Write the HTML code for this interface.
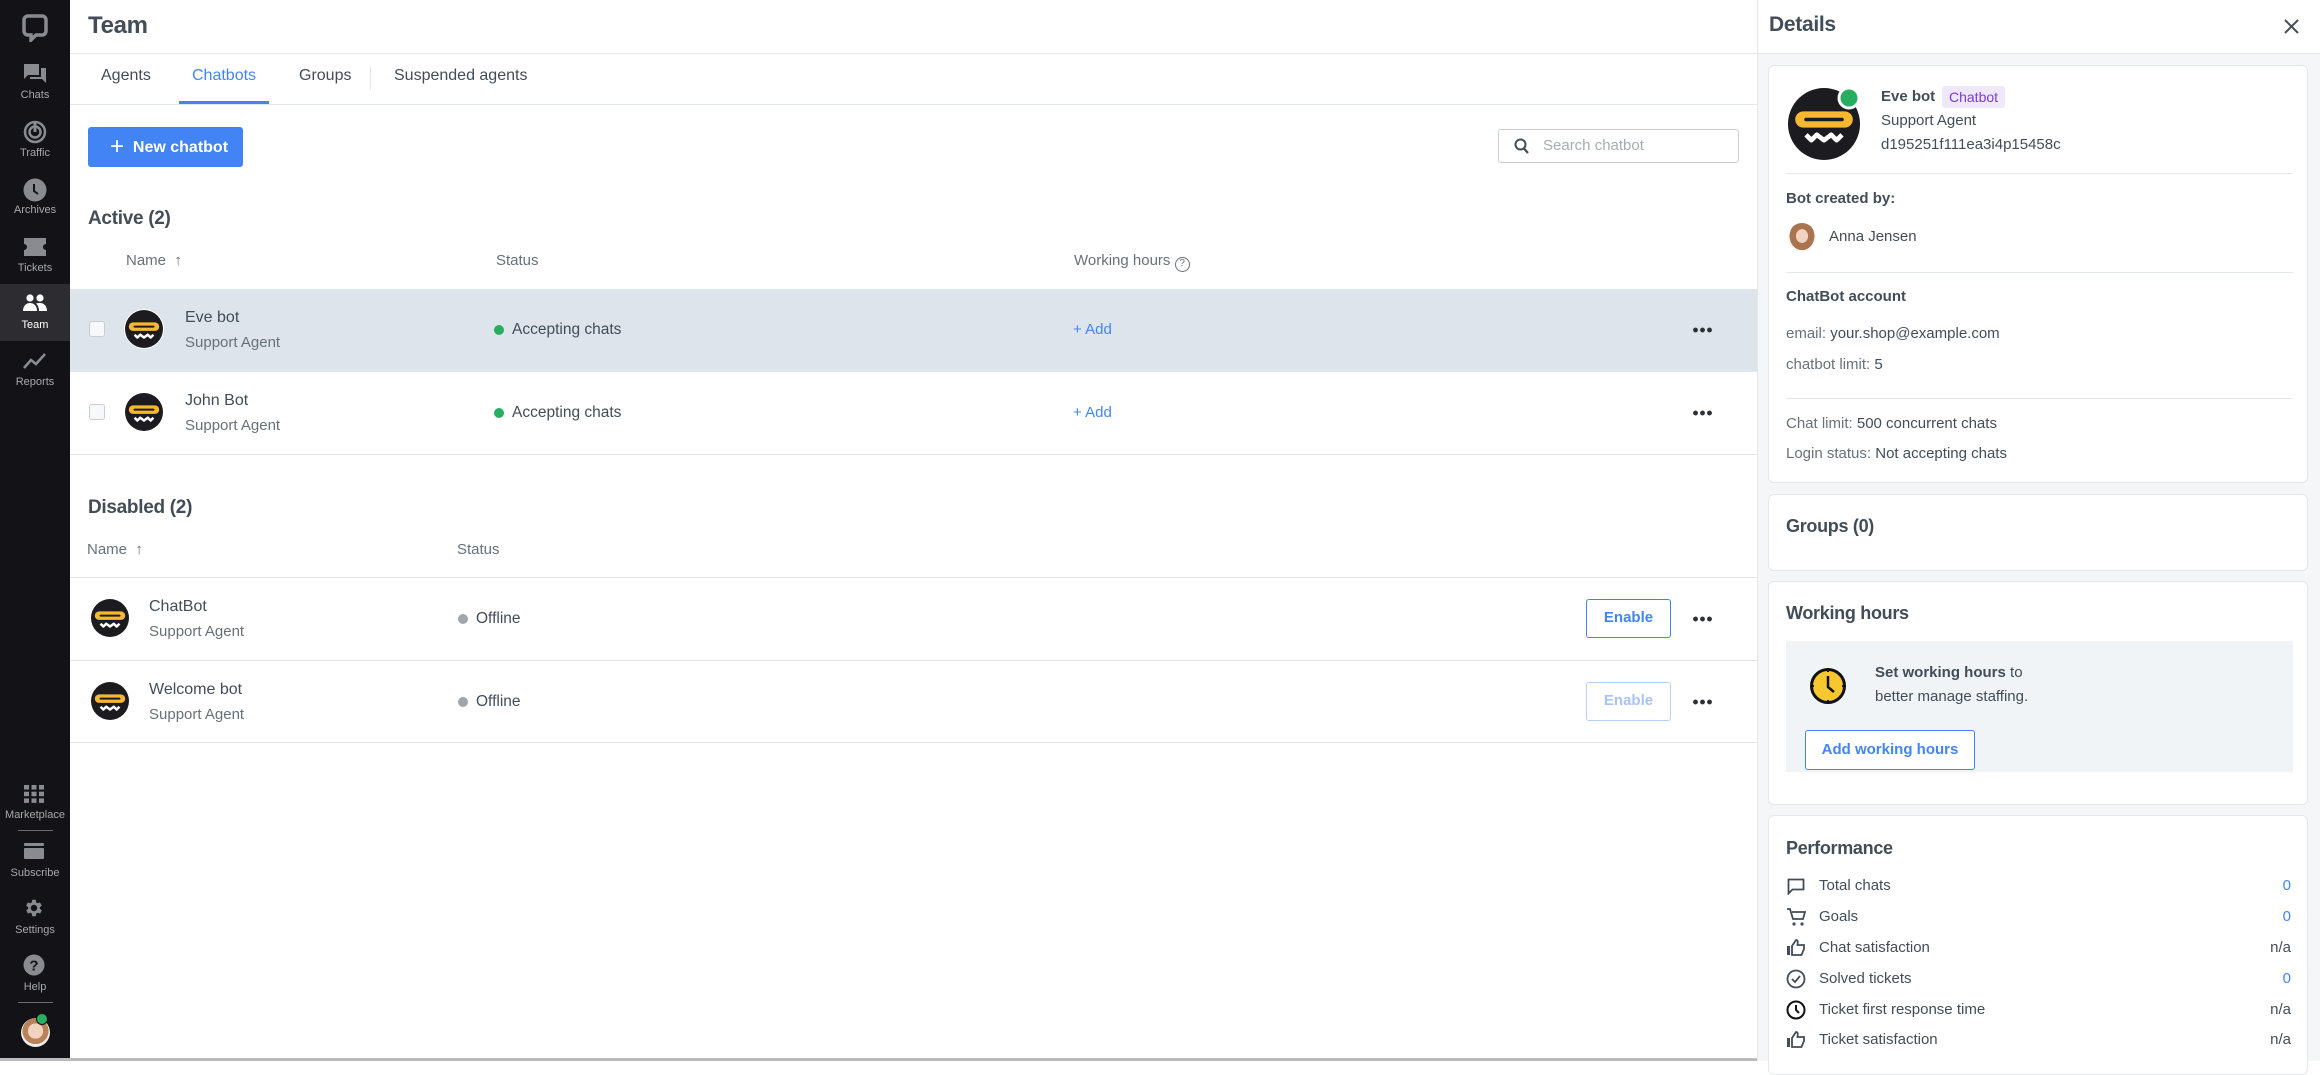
<!DOCTYPE html>
<html><head><meta charset="utf-8"><style>
*{box-sizing:border-box;margin:0;padding:0}
body{width:2320px;height:1061px;overflow:hidden;background:#fff;font-family:"Liberation Sans",sans-serif;color:#424d57;position:relative}
.a{position:absolute;white-space:nowrap}
.sb{position:absolute;left:0;top:0;width:70px;height:1061px;background:#131317}
.sl{position:absolute;left:0;width:70px;text-align:center;font-size:11px;color:#a7a8ad}
.ic{position:absolute;left:23px}
.t{font-size:16px;color:#424d57}
.s{font-size:15px;color:#677179}
.h{font-size:15px;color:#677179}
.line{position:absolute;height:1px;background:#e4e8ec}
.dot{position:absolute;width:10px;height:10px;border-radius:50%}
.card{position:absolute;left:1768px;width:540px;border:1px solid #e4e8ec;border-radius:6px;background:#fff}
.dots{position:absolute;width:20px;height:6px;background:radial-gradient(circle,#2d3238 2.2px,transparent 2.6px) 0 0/7px 6px repeat-x}
.hd{font-weight:bold;letter-spacing:-0.3px}
</style></head><body>
<svg width="0" height="0" style="position:absolute"><defs>
<symbol id="bot" viewBox="0 0 40 40"><circle cx="20" cy="20" r="20" fill="#1b1b20"/><rect x="4" y="13" width="32" height="9" rx="4.5" fill="#f5b830"/><rect x="9" y="16.5" width="22" height="2" rx="1" fill="#1b1b20"/><path d="M10 26 l3 3 l3-3 l4 3 l4-3 l3 3 l3-3" stroke="#fff" stroke-width="2.6" fill="none" stroke-linejoin="round"/></symbol>
</defs></svg>

<div class="sb">
<svg class="ic" style="top:14px;left:22px" width="26" height="28" viewBox="0 0 26 28"><path d="M6 2h14a4 4 0 0 1 4 4v11a4 4 0 0 1-4 4h-6l-5 5v-5H6a4 4 0 0 1-4-4V6a4 4 0 0 1 4-4z" fill="none" stroke="#8a8b90" stroke-width="3.5"/></svg>
<svg class="ic" style="top:63px" width="24" height="22" viewBox="0 0 24 22"><path d="M1 1h15v11H5l-4 4z" fill="#8a8b90"/><path d="M18 5h5v15l-4-4H7v-2h11z" fill="#8a8b90"/></svg>
<div class="sl" style="top:89px">Chats</div>
<svg class="ic" style="top:120px" width="24" height="24" viewBox="0 0 24 24"><circle cx="12" cy="12" r="10" fill="none" stroke="#8a8b90" stroke-width="2.5"/><circle cx="12" cy="12" r="5.5" fill="none" stroke="#8a8b90" stroke-width="2.5"/><path d="M12 2v10" stroke="#8a8b90" stroke-width="3"/></svg>
<div class="sl" style="top:147px">Traffic</div>
<svg class="ic" style="top:178px" width="24" height="24" viewBox="0 0 24 24"><circle cx="12" cy="12" r="11.5" fill="#8a8b90"/><path d="M11 6v7l4 3" stroke="#131317" stroke-width="2" fill="none"/></svg>
<div class="sl" style="top:204px">Archives</div>
<svg class="ic" style="top:237px" width="24" height="20" viewBox="0 0 24 20"><path d="M1 1h22v6a3 3 0 0 0 0 6v6H1v-6a3 3 0 0 0 0-6z" fill="#8a8b90"/></svg>
<div class="sl" style="top:262px">Tickets</div>
<div style="position:absolute;top:284px;left:0;width:70px;height:57px;background:#2c2c31"></div>
<svg class="ic" style="top:294px" width="24" height="18" viewBox="0 0 24 18"><circle cx="7" cy="4" r="3.6" fill="#fff"/><circle cx="17" cy="4" r="3.6" fill="#fff"/><path d="M0 17c0-5 3-8 7-8s7 3 7 8z" fill="#fff"/><path d="M13 9.5c1-.4 2.5-.5 4-.5 4 0 7 3 7 8h-8c0-3-1-6-3-7.5z" fill="#fff"/></svg>
<div class="sl" style="top:319px;color:#fff">Team</div>
<svg class="ic" style="top:352px" width="24" height="18" viewBox="0 0 24 18"><path d="M1 16l7-8 5 4 9-10" stroke="#8a8b90" stroke-width="2.5" fill="none"/></svg>
<div class="sl" style="top:376px">Reports</div>
<svg class="ic" style="top:784px" width="22" height="20" viewBox="0 0 22 20"><g fill="#8a8b90"><rect x="1" y="1" width="5" height="4.5"/><rect x="8.5" y="1" width="5" height="4.5"/><rect x="16" y="1" width="5" height="4.5"/><rect x="1" y="7.7" width="5" height="4.5"/><rect x="8.5" y="7.7" width="5" height="4.5"/><rect x="16" y="7.7" width="5" height="4.5"/><rect x="1" y="14.4" width="5" height="4.5"/><rect x="8.5" y="14.4" width="5" height="4.5"/><rect x="16" y="14.4" width="5" height="4.5"/></g></svg>
<div class="sl" style="top:809px">Marketplace</div>
<div style="position:absolute;left:18px;top:830px;width:35px;height:1px;background:#6a6b70"></div>
<svg class="ic" style="top:843px" width="22" height="17" viewBox="0 0 22 17"><rect x="1" y="0" width="20" height="3" rx="1" fill="#8a8b90"/><rect x="1" y="5" width="20" height="11" rx="1" fill="#8a8b90"/></svg>
<div class="sl" style="top:867px">Subscribe</div>
<svg class="ic" style="top:897px" width="22" height="22" viewBox="0 0 24 24"><path fill="#8a8b90" d="M19.4 13a7.7 7.7 0 0 0 0-2l2.1-1.6-2-3.5-2.5 1a7.5 7.5 0 0 0-1.7-1L15 3h-4l-.4 2.9a7.5 7.5 0 0 0-1.7 1l-2.5-1-2 3.5L6.6 11a7.7 7.7 0 0 0 0 2l-2.1 1.6 2 3.5 2.5-1a7.5 7.5 0 0 0 1.7 1L11 21h4l.4-2.9a7.5 7.5 0 0 0 1.7-1l2.5 1 2-3.5zM13 15.5a3.5 3.5 0 1 1 0-7 3.5 3.5 0 0 1 0 7z" transform="translate(-1 0)"/></svg>
<div class="sl" style="top:924px">Settings</div>
<svg class="ic" style="top:954px" width="22" height="22" viewBox="0 0 22 22"><circle cx="11" cy="11" r="10.5" fill="#8a8b90"/><text x="11" y="16.5" text-anchor="middle" font-size="15" font-weight="bold" fill="#131317" font-family="Liberation Sans">?</text></svg>
<div class="sl" style="top:981px">Help</div>
<div style="position:absolute;left:18px;top:1002px;width:35px;height:1px;background:#6a6b70"></div>
<div style="position:absolute;left:21px;top:1018px;width:29px;height:29px;border-radius:50%;background:radial-gradient(circle at 50% 45%,#f1d3bf 0 35%,#b9835a 36% 60%,#eee 61%)"></div>
<div style="position:absolute;left:36px;top:1013px;width:12px;height:12px;border-radius:50%;background:#27ae60;border:1px solid #131317"></div>
</div>

<!-- main -->
<div class="a hd" style="left:88px;top:12px;font-size:24px;color:#424d57">Team</div>
<div class="line" style="left:70px;top:53px;width:1687px"></div>
<div class="a" style="left:101px;top:67px;font-size:16px;color:#424d57">Agents</div>
<div class="a" style="left:192px;top:67px;font-size:16px;color:#4384f5">Chatbots</div>
<div style="position:absolute;left:179px;top:101px;width:90px;height:4px;background:#4384f5"></div>
<div class="a" style="left:299px;top:67px;font-size:16px;color:#424d57">Groups</div>
<div style="position:absolute;left:370px;top:66px;width:1px;height:24px;background:#e4e8ec"></div>
<div class="a" style="left:394px;top:67px;font-size:16px;color:#424d57">Suspended agents</div>
<div class="line" style="left:70px;top:104px;width:1687px"></div>

<div style="position:absolute;left:88px;top:127px;width:155px;height:40px;background:#4384f5;border-radius:3px;color:#fff;font-size:16px;font-weight:bold;line-height:40px;padding-left:22px"><span style="font-size:24px;font-weight:normal;vertical-align:-2px">+</span>&nbsp; New chatbot</div>

<div style="position:absolute;left:1498px;top:129px;width:241px;height:34px;border:1px solid #c9cdd2;border-radius:3px"></div>
<svg class="a" style="left:1514px;top:138px" width="16" height="17" viewBox="0 0 16 17"><circle cx="6.5" cy="6.5" r="5" stroke="#424d57" stroke-width="2" fill="none"/><path d="M10 10.5l4 4.5" stroke="#424d57" stroke-width="2.2"/></svg>
<div class="a" style="left:1543px;top:137px;font-size:15px;color:#a7adb3">Search chatbot</div>

<div class="a hd" style="left:88px;top:208px;font-size:19px;color:#424d57">Active (2)</div>
<div class="a h" style="left:126px;top:252px">Name &nbsp;<span style="font-size:15px">↑</span></div>
<div class="a h" style="left:496px;top:252px">Status</div>
<div class="a h" style="left:1074px;top:252px">Working hours <span style="display:inline-block;width:15px;height:15px;border:1.5px solid #677179;border-radius:50%;font-size:10px;text-align:center;line-height:12px;vertical-align:-1px">?</span></div>

<div style="position:absolute;left:70px;top:289px;width:1687px;height:82px;background:#dde4eb"></div>
<div class="line" style="left:70px;top:371px;width:1687px"></div>
<div class="line" style="left:70px;top:454px;width:1687px"></div>

<!-- row1 -->
<div style="position:absolute;left:89px;top:321px;width:16px;height:16px;border:1px solid #c9cdd2;border-radius:3px;background:#f6f8fa"></div>
<svg class="a" style="left:124px;top:309px" width="40" height="40"><circle cx="20" cy="20" r="20" fill="#fff"/><use href="#bot" x="1" y="1" width="38" height="38"/></svg>
<div class="a t" style="left:185px;top:309px">Eve bot</div>
<div class="a s" style="left:185px;top:334px">Support Agent</div>
<div class="dot" style="left:494px;top:325px;background:#27ae60"></div>
<div class="a" style="left:512px;top:321px;font-size:15.5px">Accepting chats</div>
<div class="a" style="left:1073px;top:321px;font-size:15px;color:#4384f5">+ Add</div>
<div class="dots" style="left:1692px;top:327px"></div>
<!-- row2 -->
<div style="position:absolute;left:89px;top:404px;width:16px;height:16px;border:1px solid #c9cdd2;border-radius:3px;background:#f6f8fa"></div>
<svg class="a" style="left:124px;top:392px" width="40" height="40"><use href="#bot" x="1" y="1" width="38" height="38"/></svg>
<div class="a t" style="left:185px;top:392px">John Bot</div>
<div class="a s" style="left:185px;top:417px">Support Agent</div>
<div class="dot" style="left:494px;top:408px;background:#27ae60"></div>
<div class="a" style="left:512px;top:404px;font-size:15.5px">Accepting chats</div>
<div class="a" style="left:1073px;top:404px;font-size:15px;color:#4384f5">+ Add</div>
<div class="dots" style="left:1692px;top:410px"></div>

<div class="a hd" style="left:88px;top:497px;font-size:19px;color:#424d57">Disabled (2)</div>
<div class="a h" style="left:87px;top:541px">Name &nbsp;↑</div>
<div class="a h" style="left:457px;top:541px">Status</div>
<div class="line" style="left:70px;top:577px;width:1687px"></div>
<div class="line" style="left:70px;top:660px;width:1687px"></div>
<div class="line" style="left:70px;top:742px;width:1687px"></div>
<!-- row3 -->
<svg class="a" style="left:90px;top:598px" width="40" height="40"><use href="#bot" x="1" y="1" width="38" height="38"/></svg>
<div class="a t" style="left:149px;top:598px">ChatBot</div>
<div class="a s" style="left:149px;top:623px">Support Agent</div>
<div class="dot" style="left:458px;top:614px;background:#a2a6ab"></div>
<div class="a" style="left:476px;top:610px;font-size:15.5px">Offline</div>
<div style="position:absolute;left:1586px;top:599px;width:85px;height:39px;border:1.5px solid #4384f5;border-radius:3px;color:#4384f5;font-size:15px;font-weight:bold;text-align:center;line-height:36px">Enable</div>
<div class="dots" style="left:1692px;top:616px"></div>
<!-- row4 -->
<svg class="a" style="left:90px;top:681px" width="40" height="40"><use href="#bot" x="1" y="1" width="38" height="38"/></svg>
<div class="a t" style="left:149px;top:681px">Welcome bot</div>
<div class="a s" style="left:149px;top:706px">Support Agent</div>
<div class="dot" style="left:458px;top:697px;background:#a2a6ab"></div>
<div class="a" style="left:476px;top:693px;font-size:15.5px">Offline</div>
<div style="position:absolute;left:1586px;top:682px;width:85px;height:39px;border:1.5px solid #b9cff8;border-radius:3px;color:#a9c3f5;font-size:15px;font-weight:bold;text-align:center;line-height:36px">Enable</div>
<div class="dots" style="left:1692px;top:699px"></div>

<div style="position:absolute;left:0;top:1058px;width:2320px;height:3px;background:#bbb"></div>

<!-- right panel -->
<div style="position:absolute;left:1757px;top:0;width:563px;height:1061px;background:#f5f6f8;border-left:1px solid #e4e8ec"></div>
<div style="position:absolute;left:1758px;top:0;width:562px;height:54px;background:#fff;border-bottom:1px solid #e4e8ec"></div>
<div class="a hd" style="left:1769px;top:13px;font-size:21px;color:#424d57">Details</div>
<svg class="a" style="left:2283px;top:18px" width="17" height="17"><path d="M2 2l13 13M15 2L2 15" stroke="#424d57" stroke-width="2"/></svg>

<div class="card" style="top:65px;height:418px">
<svg class="a" style="left:18px;top:17px" width="78" height="78"><use href="#bot" width="72" height="72" x="1" y="5"/><circle cx="62" cy="15" r="10" fill="#27ae60" stroke="#fff" stroke-width="3"/></svg>
<div class="a" style="left:112px;top:22px;font-size:15px;font-weight:bold;color:#424d57">Eve bot</div>
<div class="a" style="left:173px;top:20px;height:22px;padding:0 7px;background:#efe8fb;border-radius:3px;color:#7c3ad8;font-size:14px;line-height:22px">Chatbot</div>
<div class="a" style="left:112px;top:46px;font-size:15px;color:#424d57">Support Agent</div>
<div class="a" style="left:112px;top:70px;font-size:15px;color:#424d57">d195251f111ea3i4p15458c</div>
<div class="line" style="left:17px;top:107px;width:507px"></div>
<div class="a" style="left:17px;top:124px;font-size:15px;font-weight:bold;color:#424d57">Bot created by:</div>
<div style="position:absolute;left:19px;top:157px;width:28px;height:29px;border-radius:50%;background:radial-gradient(ellipse at 50% 45%,#f1d3bf 0 30%,#a97550 31% 62%,#f4f4f4 63%)"></div>
<div class="a" style="left:60px;top:162px;font-size:15px;color:#424d57">Anna Jensen</div>
<div class="line" style="left:17px;top:206px;width:507px"></div>
<div class="a" style="left:17px;top:222px;font-size:15px;font-weight:bold;color:#424d57">ChatBot account</div>
<div class="a" style="left:17px;top:259px;font-size:15px;color:#677179">email: <span style="color:#424d57">your.shop@example.com</span></div>
<div class="a" style="left:17px;top:290px;font-size:15px;color:#677179">chatbot limit: <span style="color:#424d57">5</span></div>
<div class="line" style="left:17px;top:332px;width:507px"></div>
<div class="a" style="left:17px;top:349px;font-size:15px;color:#677179">Chat limit: <span style="color:#424d57">500 concurrent chats</span></div>
<div class="a" style="left:17px;top:379px;font-size:15px;color:#677179">Login status: <span style="color:#424d57">Not accepting chats</span></div>
</div>

<div class="card" style="top:494px;height:77px">
<div class="a hd" style="left:17px;top:21px;font-size:18px;color:#424d57">Groups (0)</div>
</div>

<div class="card" style="top:581px;height:224px">
<div class="a hd" style="left:17px;top:21px;font-size:18px;color:#424d57">Working hours</div>
<div style="position:absolute;left:17px;top:59px;width:507px;height:131px;background:#f0f4f7"></div>
<svg class="a" style="left:39px;top:84px" width="40" height="40" viewBox="0 0 40 40"><circle cx="20" cy="20" r="16.5" fill="#f7c730" stroke="#111" stroke-width="3"/><path d="M20 10v11l6 5" stroke="#111" stroke-width="2.5" fill="none"/><path d="M20 2v4M20 34v4M2 20h4M34 20h4" stroke="#111" stroke-width="2"/></svg>
<div class="a" style="left:106px;top:82px;font-size:15px;color:#424d57"><b>Set working hours</b> to</div>
<div class="a" style="left:106px;top:106px;font-size:15px;color:#424d57">better manage staffing.</div>
<div style="position:absolute;left:36px;top:148px;width:170px;height:40px;background:#fff;border:1.5px solid #4384f5;border-radius:3px;color:#4384f5;font-size:15px;font-weight:bold;text-align:center;line-height:37px">Add working hours</div>
</div>

<div class="card" style="top:815px;height:260px">
<div class="a hd" style="left:17px;top:22px;font-size:18px;color:#424d57">Performance</div>
<svg class="a" style="left:18px;top:62px" width="18" height="17"><path d="M1.5 1.5h15v10h-11l-4 4z" stroke="#424d57" stroke-width="1.8" fill="none"/></svg>
<div class="a" style="left:50px;top:61px;font-size:15px;color:#424d57">Total chats</div><div class="a" style="right:16px;top:61px;font-size:15px;color:#4384f5">0</div>
<svg class="a" style="left:17px;top:91px" width="20" height="20"><path d="M1 2h3l3 10h10l2-7H6" stroke="#424d57" stroke-width="1.8" fill="none"/><circle cx="8" cy="17" r="1.6" fill="#424d57"/><circle cx="16" cy="17" r="1.6" fill="#424d57"/></svg>
<div class="a" style="left:50px;top:92px;font-size:15px;color:#424d57">Goals</div><div class="a" style="right:16px;top:92px;font-size:15px;color:#4384f5">0</div>
<svg class="a" style="left:17px;top:122px" width="20" height="18"><path d="M1 8h3v9H1z" fill="#424d57"/><path d="M6 8l4-6c2 0 2 2 1.5 5H18v4l-2.5 6H6z" stroke="#424d57" stroke-width="1.8" fill="none"/></svg>
<div class="a" style="left:50px;top:123px;font-size:15px;color:#424d57">Chat satisfaction</div><div class="a" style="right:16px;top:123px;font-size:15px;color:#424d57">n/a</div>
<svg class="a" style="left:17px;top:153px" width="20" height="20"><circle cx="10" cy="10" r="8.5" stroke="#424d57" stroke-width="1.8" fill="none"/><path d="M6 10l3 3 5-6" stroke="#424d57" stroke-width="1.8" fill="none"/></svg>
<div class="a" style="left:50px;top:154px;font-size:15px;color:#424d57">Solved tickets</div><div class="a" style="right:16px;top:154px;font-size:15px;color:#4384f5">0</div>
<svg class="a" style="left:17px;top:184px" width="20" height="20"><circle cx="10" cy="10" r="8.5" stroke="#111" stroke-width="2" fill="none"/><path d="M10 5v5l3 3" stroke="#111" stroke-width="2" fill="none"/></svg>
<div class="a" style="left:50px;top:185px;font-size:15px;color:#424d57">Ticket first response time</div><div class="a" style="right:16px;top:185px;font-size:15px;color:#424d57">n/a</div>
<svg class="a" style="left:17px;top:214px" width="20" height="18"><path d="M1 8h3v9H1z" fill="#424d57"/><path d="M6 8l4-6c2 0 2 2 1.5 5H18v4l-2.5 6H6z" stroke="#424d57" stroke-width="1.8" fill="none"/></svg>
<div class="a" style="left:50px;top:215px;font-size:15px;color:#424d57">Ticket satisfaction</div><div class="a" style="right:16px;top:215px;font-size:15px;color:#424d57">n/a</div>
</div>
</body></html>
